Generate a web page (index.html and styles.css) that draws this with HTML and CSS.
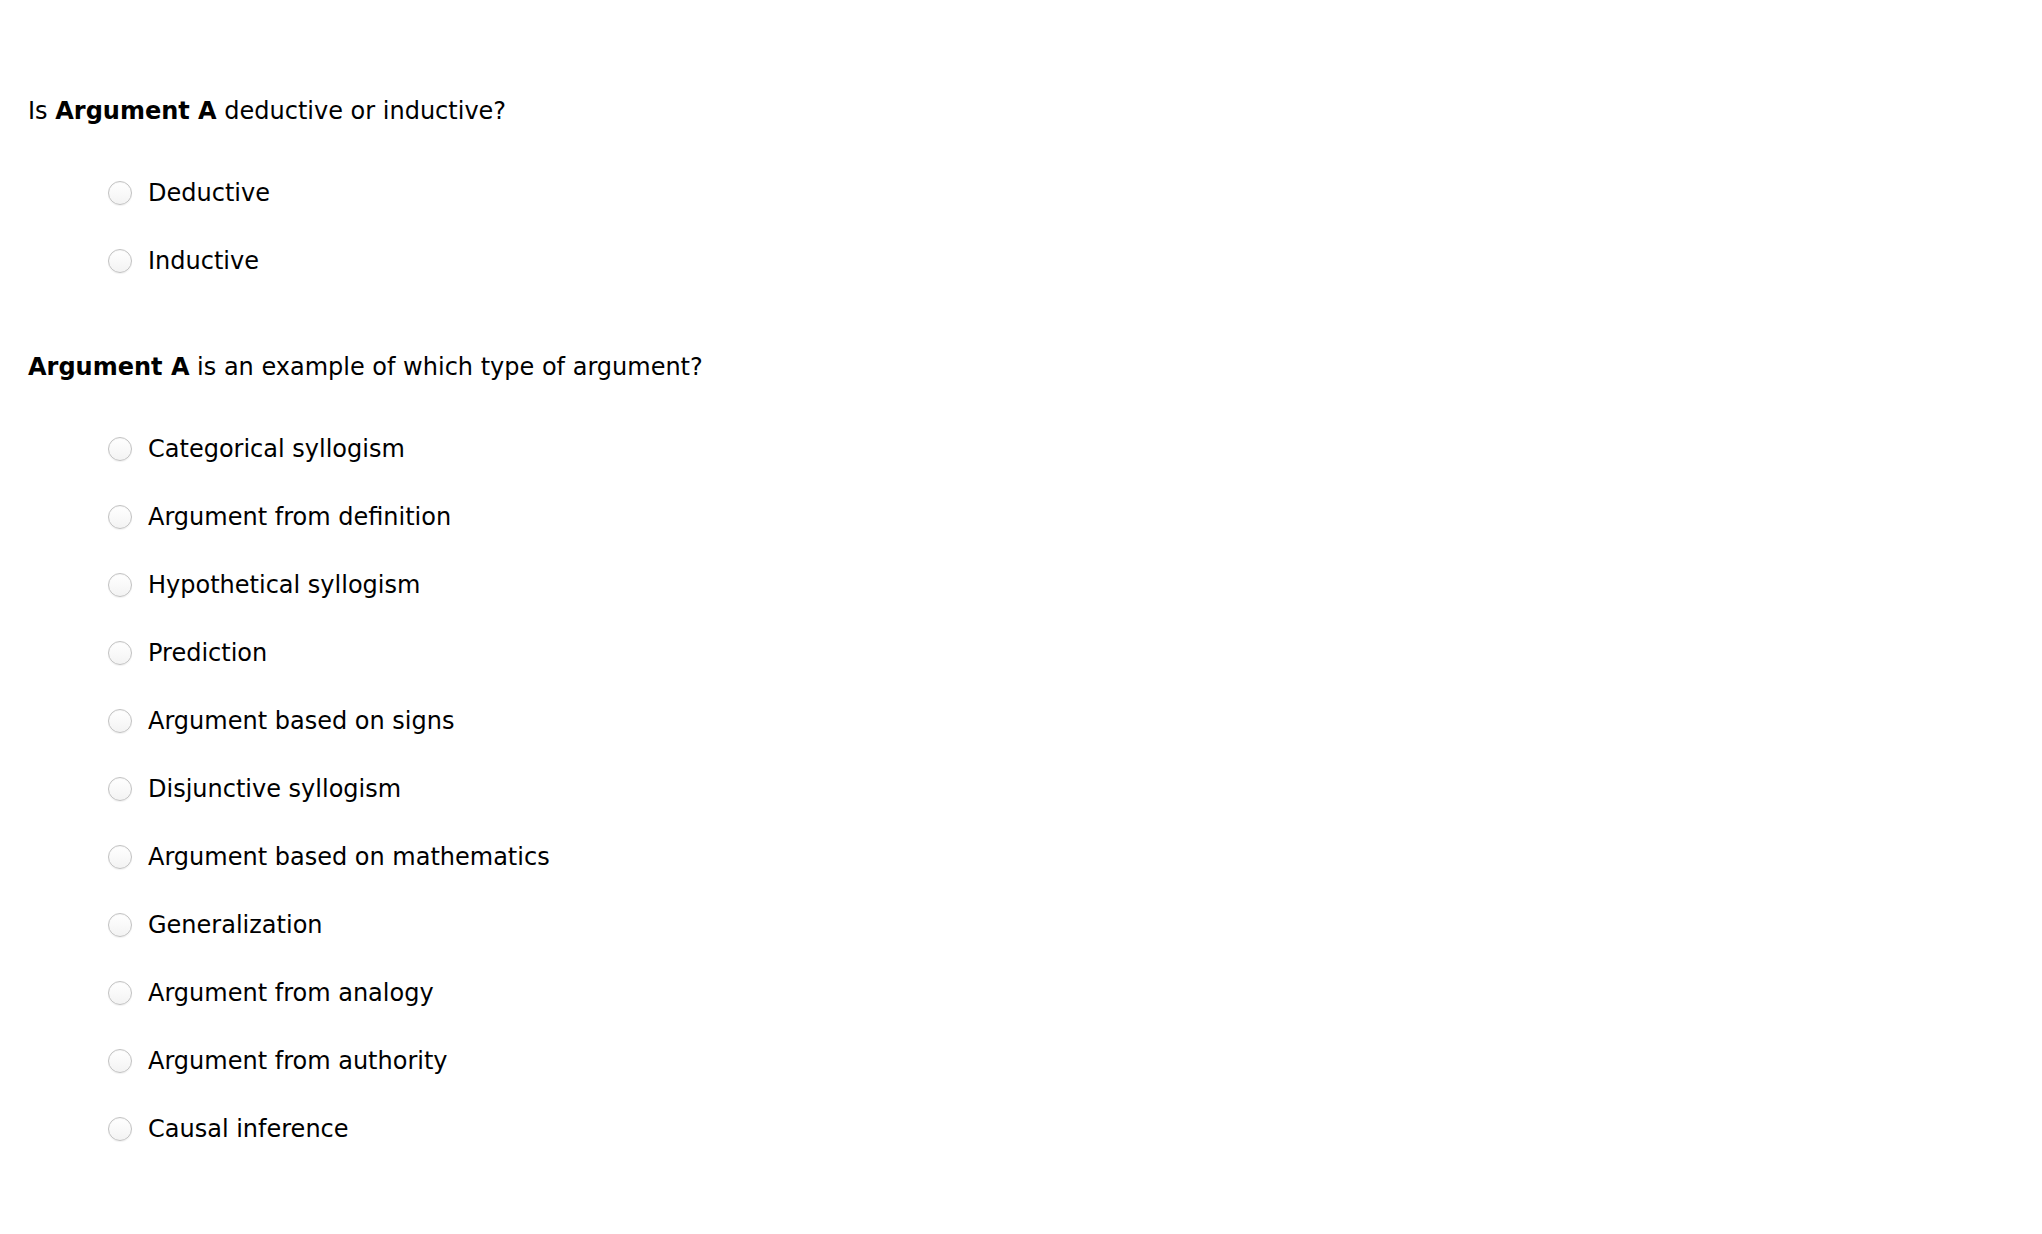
FILE: index.html
```html
<!DOCTYPE html>
<html lang="en">
<head>
    <meta charset="UTF-8">
    <title>Argument A</title>
    <link rel="stylesheet" href="styles.css">
</head>
<body>
    <div class="question">
        <div class="prompt">Is <b>Argument A</b> deductive or inductive?</div>
        <div class="options">
            <label class="option"><input type="radio" name="q1"> Deductive</label>
            <label class="option"><input type="radio" name="q1"> Inductive</label>
        </div>
    </div>

    <div class="question">
        <div class="prompt"><b>Argument A</b> is an example of which type of argument?</div>
        <div class="options">
            <label class="option"><input type="radio" name="q2"> Categorical syllogism</label>
            <label class="option"><input type="radio" name="q2"> Argument from definition</label>
            <label class="option"><input type="radio" name="q2"> Hypothetical syllogism</label>
            <label class="option"><input type="radio" name="q2"> Prediction</label>
            <label class="option"><input type="radio" name="q2"> Argument based on signs</label>
            <label class="option"><input type="radio" name="q2"> Disjunctive syllogism</label>
            <label class="option"><input type="radio" name="q2"> Argument based on mathematics</label>
            <label class="option"><input type="radio" name="q2"> Generalization</label>
            <label class="option"><input type="radio" name="q2"> Argument from analogy</label>
            <label class="option"><input type="radio" name="q2"> Argument from authority</label>
            <label class="option"><input type="radio" name="q2"> Causal inference</label>
        </div>
    </div>
</body>
</html>
```

FILE: styles.css
```css
body {
    font-family: 'DejaVu Sans', Verdana, sans-serif;
    font-size: 24px;
    color: #000;
    background: #fff;
    margin: 0;
    padding: 97px 28px 40px;
}

.question {
    margin-bottom: 78px;
}

.prompt {
    line-height: 28px;
    margin-bottom: 54px;
}

.prompt b {
    font-weight: bold;
}

.options {
    display: flex;
    flex-direction: column;
    gap: 40px;
    padding-left: 80px;
}

.option {
    display: flex;
    align-items: center;
    gap: 16px;
    line-height: 28px;
}

/* flat grey radio circles */
.option input {
    appearance: none;
    -webkit-appearance: none;
    width: 24px;
    height: 24px;
    margin: 0;
    border-radius: 50%;
    border: 1px solid #c2c2c2;
    background: linear-gradient(#ffffff, #f3f3f3);
    box-shadow: inset 0 1px 1px rgba(0,0,0,0.04), 0 1px 1px rgba(0,0,0,0.06);
    flex-shrink: 0;
}
```
